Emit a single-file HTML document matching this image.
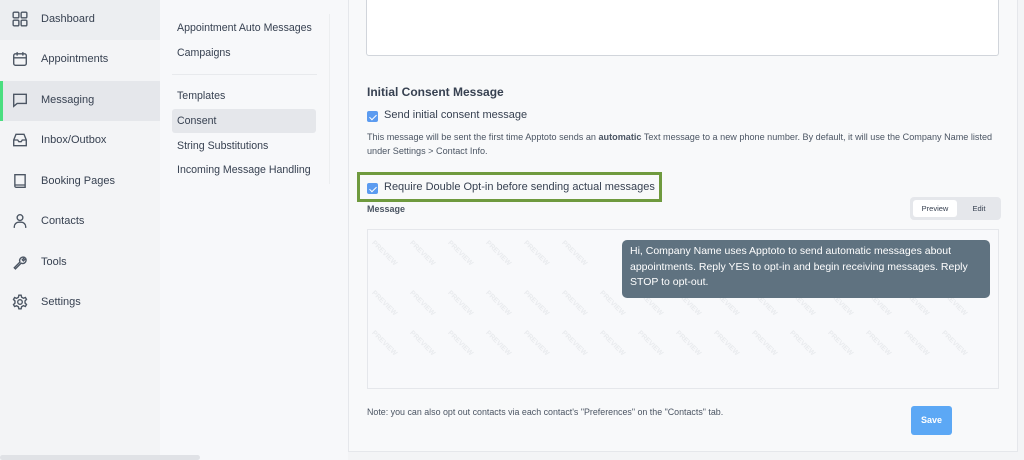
<!DOCTYPE html><html><head><style>
*{box-sizing:border-box;margin:0;padding:0}
body{width:1024px;height:460px;overflow:hidden;font-family:"Liberation Sans",sans-serif;background:#f3f4f6;position:relative;color:#374151}
.sb{position:absolute;left:0;top:0;width:160px;height:460px;background:#f3f4f6}
.it{position:absolute;left:0;width:160px;height:40px;font-size:11px;color:#374151}
.it span{position:absolute;left:41px;top:13px}
.it svg{position:absolute;left:12px;top:11px}
.sub{position:absolute;left:160px;top:0;width:188px;height:460px;background:#f7f8fa}
.sub div{position:absolute;left:17px;font-size:10.6px;color:#374151}
.main{position:absolute;left:348px;top:-2px;width:670px;height:454px;background:#f8f9fa;border:1px solid #e5e7eb}
.cb{position:absolute;width:11px;height:11px;background:#5b9bf0;border-radius:2px}
.cb:after{content:"";position:absolute;left:3.5px;top:1.5px;width:3px;height:6px;border:solid #fff;border-width:0 1.3px 1.3px 0;transform:rotate(45deg)}
.wm{position:absolute;font-size:7px;color:#e9ebee;transform:rotate(45deg);font-weight:bold}
</style></head><body>
<div class="sb">
<div class="it" style="top:0;background:#eceef1"><svg width="16" height="16" viewBox="0 0 14 14" fill="none" stroke="#4b5563" stroke-width="1.2"><rect x="1" y="1" width="5" height="5" rx="1"/><rect x="8" y="1" width="5" height="5" rx="1"/><rect x="1" y="8" width="5" height="5" rx="1"/><rect x="8" y="8" width="5" height="5" rx="1"/></svg><span>Dashboard</span></div>
<div class="it" style="top:40px"><svg width="16" height="16" viewBox="0 0 14 14" fill="none" stroke="#4b5563" stroke-width="1.2"><rect x="1.5" y="2.5" width="11" height="10" rx="1.5"/><path d="M1.5 6h11M4.5 1v3M9.5 1v3"/></svg><span>Appointments</span></div>
<div class="it" style="top:81px;background:#e5e7eb;border-left:3px solid #4ade80"><svg style="left:9px" width="16" height="16" viewBox="0 0 14 14" fill="none" stroke="#4b5563" stroke-width="1.2"><path d="M1.5 2h11v8h-8l-3 2.5z"/></svg><span style="left:38px">Messaging</span></div>
<div class="it" style="top:121px"><svg width="16" height="16" viewBox="0 0 14 14" fill="none" stroke="#4b5563" stroke-width="1.2"><path d="M1.5 7l2-5h7l2 5v5h-11zM1.5 7h3.5l1 1.5h2l1-1.5h3.5"/></svg><span>Inbox/Outbox</span></div>
<div class="it" style="top:162px"><svg width="16" height="16" viewBox="0 0 14 14" fill="none" stroke="#4b5563" stroke-width="1.2"><path d="M2.5 1.5h9v11h-8a1 1 0 0 1-1-1zM2.5 10.5h9"/></svg><span>Booking Pages</span></div>
<div class="it" style="top:202px"><svg width="16" height="16" viewBox="0 0 14 14" fill="none" stroke="#4b5563" stroke-width="1.2"><circle cx="7" cy="4" r="2.5"/><path d="M2 13v-1a4 4 0 0 1 4-4h2a4 4 0 0 1 4 4v1"/></svg><span>Contacts</span></div>
<div class="it" style="top:243px"><svg width="16" height="16" viewBox="0 0 14 14" fill="none" stroke="#4b5563" stroke-width="1.2"><path d="M2 12l5-5a3 3 0 0 1 4-4l-2 2 1 1 2-2a3 3 0 0 1-4 4l-5 5z"/></svg><span>Tools</span></div>
<div class="it" style="top:283px"><svg width="16" height="16" viewBox="0 0 14 14" fill="none" stroke="#4b5563" stroke-width="1.2"><path d="M6 1h2l.4 1.8 1.6.9 1.7-.7 1 1.7-1.3 1.3v1.9l1.3 1.3-1 1.7-1.7-.7-1.6.9L8 13H6l-.4-1.8-1.6-.9-1.7.7-1-1.7 1.3-1.3V6.1L1.3 4.8l1-1.7 1.7.7 1.6-.9z"/><circle cx="7" cy="7" r="2"/></svg><span>Settings</span></div>
</div>
<div class="sub">
<div style="top:22px">Appointment Auto Messages</div>
<div style="top:47px">Campaigns</div>
<div style="left:12px;top:74px;width:145px;height:1px;background:#e8eaed"></div>
<div style="top:90px">Templates</div>
<div style="left:12px;top:109px;width:144px;height:24px;background:#e5e7eb;border-radius:3px"></div>
<div style="top:115px">Consent</div>
<div style="top:140px">String Substitutions</div>
<div style="top:164px">Incoming Message Handling</div>
<div style="left:169px;top:14px;width:1px;height:170px;background:#eceef0"></div>
</div>
<div class="main">
<div style="position:absolute;left:17px;top:0;width:633px;height:57px;border:1px solid #d1d5db;border-top:none;background:#fff;border-radius:0 0 3px 3px"></div>
<div style="position:absolute;left:18px;top:86px;font-size:12px;font-weight:bold;color:#374151">Initial Consent Message</div>
<div class="cb" style="left:18px;top:112px"></div>
<div style="position:absolute;left:35px;top:110px;font-size:11px">Send initial consent message</div>
<div style="position:absolute;left:18px;top:131px;width:630px;font-size:9.1px;line-height:14px;color:#4b5563">This message will be sent the first time Apptoto sends an <b>automatic</b> Text message to a new phone number. By default, it will use the Company Name listed under Settings &gt; Contact Info.</div>
<div style="position:absolute;left:8px;top:173px;width:305px;height:30px;border:3px solid #6f9a3e"></div>
<div class="cb" style="left:18px;top:184px"></div>
<div style="position:absolute;left:35px;top:182px;font-size:11px">Require Double Opt-in before sending actual messages</div>
<div style="position:absolute;left:18px;top:205px;font-size:9px;font-weight:bold;color:#4b5563">Message</div>
<div style="position:absolute;left:561px;top:198px;width:91px;height:23px;background:#e5e7eb;border-radius:4px"></div>
<div style="position:absolute;left:564px;top:201px;width:44px;height:17px;background:#fff;border-radius:3px;font-size:7.5px;text-align:center;line-height:17px">Preview</div>
<div style="position:absolute;left:610px;top:201px;width:40px;height:17px;font-size:7.5px;text-align:center;line-height:17px">Edit</div>
<div style="position:absolute;left:18px;top:230px;width:632px;height:160px;border:1px solid #e5e7eb;background:#f8f9fb;overflow:hidden">
<div class="wm" style="left:0;top:20px">PREVIEW</div><div class="wm" style="left:38px;top:20px">PREVIEW</div><div class="wm" style="left:76px;top:20px">PREVIEW</div><div class="wm" style="left:114px;top:20px">PREVIEW</div><div class="wm" style="left:152px;top:20px">PREVIEW</div><div class="wm" style="left:190px;top:20px">PREVIEW</div>
<div class="wm" style="left:0;top:70px">PREVIEW</div><div class="wm" style="left:38px;top:70px">PREVIEW</div><div class="wm" style="left:76px;top:70px">PREVIEW</div><div class="wm" style="left:114px;top:70px">PREVIEW</div><div class="wm" style="left:152px;top:70px">PREVIEW</div><div class="wm" style="left:190px;top:70px">PREVIEW</div><div class="wm" style="left:228px;top:70px">PREVIEW</div><div class="wm" style="left:266px;top:70px">PREVIEW</div><div class="wm" style="left:304px;top:70px">PREVIEW</div><div class="wm" style="left:342px;top:70px">PREVIEW</div><div class="wm" style="left:380px;top:70px">PREVIEW</div><div class="wm" style="left:418px;top:70px">PREVIEW</div><div class="wm" style="left:456px;top:70px">PREVIEW</div><div class="wm" style="left:494px;top:70px">PREVIEW</div><div class="wm" style="left:532px;top:70px">PREVIEW</div><div class="wm" style="left:570px;top:70px">PREVIEW</div>
<div class="wm" style="left:0;top:110px">PREVIEW</div><div class="wm" style="left:38px;top:110px">PREVIEW</div><div class="wm" style="left:76px;top:110px">PREVIEW</div><div class="wm" style="left:114px;top:110px">PREVIEW</div><div class="wm" style="left:152px;top:110px">PREVIEW</div><div class="wm" style="left:190px;top:110px">PREVIEW</div><div class="wm" style="left:228px;top:110px">PREVIEW</div><div class="wm" style="left:266px;top:110px">PREVIEW</div><div class="wm" style="left:304px;top:110px">PREVIEW</div><div class="wm" style="left:342px;top:110px">PREVIEW</div><div class="wm" style="left:380px;top:110px">PREVIEW</div><div class="wm" style="left:418px;top:110px">PREVIEW</div><div class="wm" style="left:456px;top:110px">PREVIEW</div><div class="wm" style="left:494px;top:110px">PREVIEW</div><div class="wm" style="left:532px;top:110px">PREVIEW</div><div class="wm" style="left:570px;top:110px">PREVIEW</div>
</div>
<div style="position:absolute;left:273px;top:241px;width:368px;height:58px;background:#5f7280;border-radius:5px;color:#fff;font-size:10.5px;line-height:15.5px;padding:4px 8px">Hi, Company Name uses Apptoto to send automatic messages about appointments. Reply YES to opt-in and begin receiving messages. Reply STOP to opt-out.</div>
<div style="position:absolute;left:18px;top:408px;font-size:8.9px;color:#4b5563">Note: you can also opt out contacts via each contact's "Preferences" on the "Contacts" tab.</div>
<div style="position:absolute;left:562px;top:407px;width:41px;height:29px;background:#5ca8f5;border-radius:3px;color:#fff;font-size:9px;font-weight:bold;text-align:center;line-height:29px">Save</div>
</div>
<div style="position:absolute;left:0;top:455px;width:200px;height:5px;background:#e0e2e6;border-radius:3px"></div>
</body></html>
